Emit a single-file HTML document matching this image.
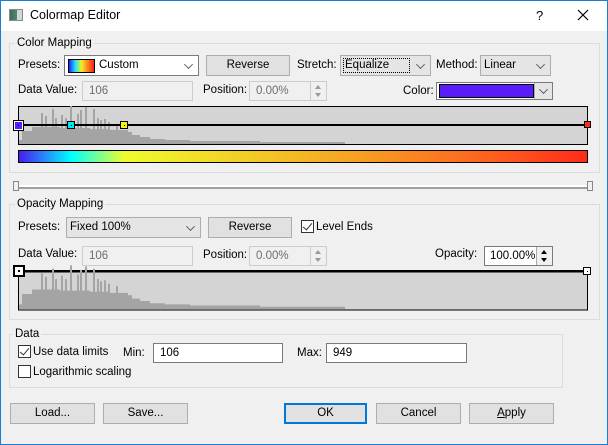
<!DOCTYPE html>
<html><head><meta charset="utf-8"><style>
*{box-sizing:border-box;margin:0;padding:0}
body{width:608px;height:445px;background:#f0f0f0;font-family:"Liberation Sans",sans-serif;font-size:11.5px;color:#000;position:relative;overflow:hidden}
.a{position:absolute;white-space:nowrap}
.frame{position:absolute;left:0;top:0;width:608px;height:445px;border:1px solid #1a7fd4;pointer-events:none}
.title{position:absolute;left:0;top:0;width:608px;height:31px;background:#fff}
.grp{position:absolute;border:1px solid #dcdcdc}
.lbl{position:absolute;background:#f0f0f0;padding:0 2px;line-height:13px}
.combo{position:absolute;border:1px solid #adadad;background:#e5e5e5;height:21px}
.white{background:#fff;border-color:#7a7a7a}
.btn{position:absolute;border:1px solid #adadad;background:#e1e1e1;height:21px;text-align:center;line-height:19px}
.inp{position:absolute;border:1px solid #cccccc;background:#f0f0f0;color:#6d6d6d;height:20px;line-height:18px;padding-left:6px}
.inpw{position:absolute;border:1px solid #7a7a7a;background:#fff;height:20px;line-height:18px;padding-left:6px}
.chev{position:absolute;right:6px;top:5px;width:7px;height:7px;border-right:1px solid #555;border-bottom:1px solid #555;transform:rotate(45deg) scale(.9)}
.spin{position:absolute;top:0;right:0;width:16px;height:18px;border-left:1px solid #ccc;background:#f0f0f0}
.cb{position:absolute;width:13px;height:13px;border:1px solid #333;background:#fff}
.ck{position:absolute;left:3px;top:0px;width:5px;height:9px;border-right:1px solid #333;border-bottom:1px solid #333;transform:rotate(40deg)}
</style></head><body>
<div class="title"></div>
<div class="a" style="left:9px;top:9px;width:14px;height:12px;border:1px solid #8a8a8a;background:linear-gradient(90deg,#3d6b5a 0,#4d8a74 60%,#cfd8d4 60%)"></div>
<div class="a" style="left:30px;top:8px;font-size:12.5px">Colormap Editor</div>
<div class="a" style="left:536px;top:8px;font-size:13px">?</div>
<svg class="a" style="left:577px;top:9px" width="12" height="12"><path d="M1 1L11 11M11 1L1 11" stroke="#000" stroke-width="1.2"/></svg>

<!-- Color Mapping -->
<div class="grp" style="left:9px;top:43px;width:591px;height:130px"></div>
<div class="lbl" style="left:15px;top:37px">Color Mapping</div>
<div class="a" style="left:18px;top:59px">Presets:</div>
<div class="combo white" style="left:64px;top:55px;width:135px"><div class="a" style="left:3px;top:3px;width:27px;height:14px;border:1px solid #000;background:linear-gradient(90deg,#2020ff,#20e0ff 25%,#f0f020 50%,#ff8020 75%,#ff2010)"></div><div class="a" style="left:34px;top:3px">Custom</div><div class="chev"></div></div>
<div class="btn" style="left:206px;top:55px;width:84px">Reverse</div>
<div class="a" style="left:297px;top:59px">Stretch:</div>
<div class="combo" style="left:340px;top:55px;width:91px"><div class="a" style="left:2px;top:2px;width:67px;height:15px;border:1px dotted #000;padding-left:1px;line-height:13px">Equalize</div><div class="chev"></div></div>
<div class="a" style="left:436px;top:59px">Method:</div>
<div class="combo" style="left:480px;top:55px;width:71px"><div class="a" style="left:3px;top:3px">Linear</div><div class="chev"></div></div>

<div class="a" style="left:18px;top:84px">Data Value:</div>
<div class="inp" style="left:82px;top:81px;width:111px">106</div>
<div class="a" style="left:203px;top:84px">Position:</div>
<div class="inp" style="left:249px;top:81px;width:78px">0.00%<div class="spin"><div class="a" style="left:4px;top:3px;border:3px solid transparent;border-bottom:4px solid #999;border-top:0"></div><div class="a" style="left:4px;top:11px;border:3px solid transparent;border-top:4px solid #999;border-bottom:0"></div></div></div>
<div class="a" style="left:403px;top:85px">Color:</div>
<div class="combo" style="left:436px;top:82px;width:117px;height:18px;background:#fff;border-color:#7a7a7a"><div class="a" style="left:2px;top:1px;width:95px;height:14px;border:1px solid #000;background:#5a1cf8"></div><div class="a" style="right:0;top:0;width:18px;height:16px;background:#e5e5e5;border-left:1px solid #adadad"><div class="chev" style="right:5px;top:3px"></div></div></div>

<svg class="a" style="left:0;top:0" width="608" height="445">
<defs><linearGradient id="g" x1="0" x2="1"><stop offset="0" stop-color="#4a18f6"/><stop offset=".093" stop-color="#00ffff"/><stop offset=".186" stop-color="#eefc2e"/><stop offset=".4" stop-color="#f3cd25"/><stop offset=".6" stop-color="#f6a020"/><stop offset=".85" stop-color="#ff5a1e"/><stop offset="1" stop-color="#ff2a1a"/></linearGradient>
<g id="h"><path fill="#a4a4a4" d="M19,144 L19,140 L22,140 L22,131 L32,131 L32,127 L60,127 L60,128 L90,128 L90,129 L110,129 L110,130 L128,130 L128,132 L132,132 L132,135 L140,135 L140,137 L150,137 L150,139 L165,139 L165,140 L190,140 L190,141 L260,141 L260,142 L345,142 L345,144 Z"/>
<g fill="#a4a4a4"><rect x="41" y="113" width="2" height="20"/><rect x="45" y="116" width="2" height="15"/><rect x="52" y="109" width="2" height="20"/><rect x="55" y="118" width="2" height="12"/><rect x="61" y="115" width="2" height="15"/><rect x="65" y="118" width="2" height="12"/><rect x="70" y="106" width="2" height="22"/><rect x="77" y="114" width="2" height="15"/><rect x="80" y="110" width="2" height="20"/><rect x="85" y="107" width="2" height="22"/><rect x="93" y="109" width="2" height="20"/><rect x="97" y="118" width="2" height="12"/><rect x="100" y="120" width="2" height="10"/><rect x="104" y="119" width="2" height="10"/><rect x="108" y="122" width="2" height="8"/><rect x="116" y="124" width="2" height="8"/></g></g></defs>
<rect x="18.5" y="106.5" width="569" height="38" fill="#d4d4d4" stroke="#000"/>
<use href="#h"/>
<rect x="18" y="124" width="569" height="2" fill="#000"/>
<rect x="13.5" y="120.5" width="10" height="10" fill="#fff" stroke="#000"/><rect x="15" y="122" width="7" height="7" fill="#5a1cf8"/><rect x="18" y="125" width="1" height="1" fill="#000"/>
<rect x="67.5" y="121.5" width="7" height="7" fill="#00e8f0" stroke="#000"/><rect x="71" y="125" width="1" height="1" fill="#000"/>
<rect x="120.5" y="121.5" width="7" height="7" fill="#f0f020" stroke="#000"/><rect x="124" y="125" width="1" height="1" fill="#000"/>
<rect x="584.5" y="121.5" width="6" height="6" fill="#ff2a1a" stroke="#000"/>
<rect x="18.5" y="150.5" width="569" height="12" fill="url(#g)" stroke="#000"/>
<rect x="14" y="185" width="578" height="2" fill="#fff"/><rect x="14" y="187" width="578" height="2" fill="#a0a0a0"/>
<rect x="13.5" y="181.5" width="5" height="9" fill="#f0f0f0" stroke="#888"/>
<rect x="587.5" y="181.5" width="5" height="9" fill="#f0f0f0" stroke="#888"/>
<rect x="18.5" y="272" width="569" height="38" fill="#d4d4d4" stroke="#000"/>
<rect x="18" y="270" width="570" height="2" fill="#000"/>
<g transform="translate(0,309) scale(1,1.15) translate(0,-144)"><use href="#h"/></g>
<rect x="14" y="266" width="10" height="10" fill="#fff" stroke="#000" stroke-width="2"/><rect x="18" y="270" width="2" height="2" fill="#000"/>
<rect x="583.5" y="267.5" width="7" height="7" fill="#fff" stroke="#000"/><rect x="587" y="271" width="1" height="1" fill="#000"/>
</svg>

<div class="grp" style="left:9px;top:204px;width:591px;height:116px"></div>
<div class="lbl" style="left:15px;top:198px">Opacity Mapping</div>
<div class="a" style="left:18px;top:221px">Presets:</div>
<div class="combo" style="left:66px;top:217px;width:135px"><div class="a" style="left:3px;top:3px">Fixed 100%</div><div class="chev"></div></div>
<div class="btn" style="left:208px;top:217px;width:84px">Reverse</div>
<div class="cb" style="left:301px;top:220px"><div class="ck"></div></div>
<div class="a" style="left:316px;top:221px">Level Ends</div>
<div class="a" style="left:18px;top:248px">Data Value:</div>
<div class="inp" style="left:82px;top:246px;width:111px">106</div>
<div class="a" style="left:203px;top:249px">Position:</div>
<div class="inp" style="left:249px;top:246px;width:78px">0.00%<div class="spin"><div class="a" style="left:4px;top:3px;border:3px solid transparent;border-bottom:4px solid #999;border-top:0"></div><div class="a" style="left:4px;top:11px;border:3px solid transparent;border-top:4px solid #999;border-bottom:0"></div></div></div>
<div class="a" style="left:435px;top:248px">Opacity:</div>
<div class="inpw" style="left:484px;top:246px;width:69px;padding-left:5px">100.00%<div class="spin" style="border-left-color:#aaa"><div class="a" style="left:4px;top:3px;border:3px solid transparent;border-bottom:4px solid #000;border-top:0"></div><div class="a" style="left:4px;top:11px;border:3px solid transparent;border-top:4px solid #000;border-bottom:0"></div></div></div>

<div class="grp" style="left:9px;top:334px;width:554px;height:54px"></div>
<div class="lbl" style="left:13px;top:328px">Data</div>
<div class="cb" style="left:18px;top:345px"><div class="ck"></div></div>
<div class="a" style="left:33px;top:346px">Use data limits</div>
<div class="a" style="left:123px;top:347px">Min:</div>
<div class="inpw" style="left:153px;top:343px;width:130px">106</div>
<div class="a" style="left:297px;top:347px">Max:</div>
<div class="inpw" style="left:326px;top:343px;width:141px">949</div>
<div class="cb" style="left:18px;top:365px"></div>
<div class="a" style="left:33px;top:366px">Logarithmic scaling</div>

<div class="btn" style="left:10px;top:403px;width:85px">Load...</div>
<div class="btn" style="left:103px;top:403px;width:85px">Save...</div>
<div class="btn" style="left:284px;top:403px;width:83px;border:2px solid #0078d7;line-height:17px">OK</div>
<div class="btn" style="left:376px;top:403px;width:85px">Cancel</div>
<div class="btn" style="left:469px;top:403px;width:85px"><u>A</u>pply</div>
<div class="frame"></div>
</body></html>
